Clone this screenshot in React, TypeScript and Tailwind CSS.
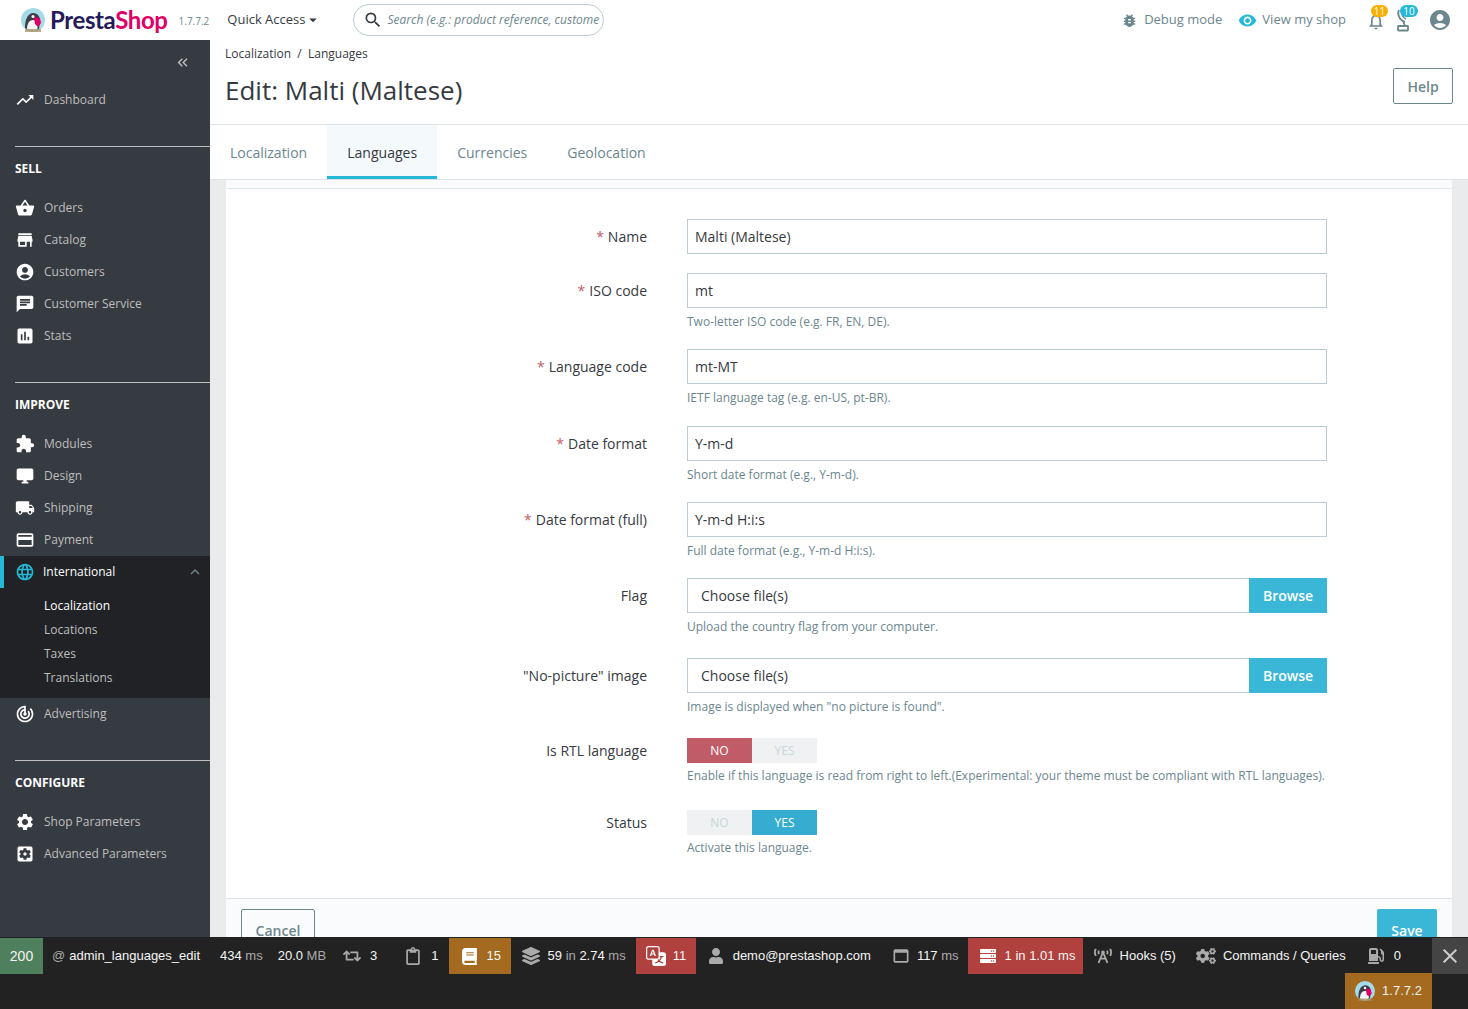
import React from "react";
import {
  MdAccountCircle,
  MdArrowDropDown,
  MdAssessment,
  MdBugReport,
  MdChat,
  MdClose,
  MdCreditCard,
  MdDesktopWindows,
  MdExpandLess,
  MdExtension,
  MdKeyboardDoubleArrowLeft,
  MdLanguage,
  MdLocalShipping,
  MdNotificationsNone,
  MdRemoveRedEye,
  MdSearch,
  MdSettings,
  MdSettingsApplications,
  MdShoppingBasket,
  MdStore,
  MdTrackChanges,
  MdTrendingUp,
} from "react-icons/md";
import {
  FaBook,
  FaBroadcastTower,
  FaCogs,
  FaGasPump,
  FaLayerGroup,
  FaRegClipboard,
  FaRetweet,
  FaServer,
  FaUser,
} from "react-icons/fa";
import { MdOutlineWebAsset } from "react-icons/md";
import { BsTranslate } from "react-icons/bs";

const sans = "font-['Open_Sans',sans-serif]";

function Puffin({ size = 24 }: { size?: number }) {
  return (
    <svg width={size} height={size} viewBox="0 0 24 24">
      <circle cx="12" cy="12" r="12" fill="#a5dbe8" />
      <path d="M4 20c0-8 2-14 8-15 5 0 7 4 7 8l-1 8c-4 2-10 2-14-1z" fill="#3b3f46" />
      <path d="M6 21c0-5 2-9 6-9 3 0 5 3 5 6l-1 4c-3 1-7 1-10-1z" fill="#f4f4f4" />
      <path d="M13 9l6 1 1 5-3 4-3-3z" fill="#df0067" />
      <circle cx="12" cy="8.5" r="1.5" fill="#fff" />
      <path d="M4 21h16v3H4z" fill="#a58b5b" opacity="0.7" />
    </svg>
  );
}

function DishIcon() {
  return (
    <svg width="20" height="24" viewBox="0 0 20 24" fill="none" stroke="#6c868e" strokeWidth="1.8">
      <path d="M5 2C3 6 5 12 11 14" />
      <path d="M8 3c-1 3 1 7 4 8" strokeWidth="1.4" />
      <path d="M9 13l2 5" />
      <rect x="4" y="18" width="10" height="4.5" rx="0.5" />
    </svg>
  );
}

function MenuLink({
  icon: Icon,
  label,
}: {
  icon: React.ComponentType<{ size?: number; className?: string }>;
  label: string;
}) {
  return (
    <div className="flex h-8 items-center pl-[15px]">
      <Icon size={20} className="mr-[9px] text-white" />
      <span className="text-[12px] text-[#bebebe]">{label}</span>
    </div>
  );
}

function MenuTitle({ children }: { children: string }) {
  return (
    <div className="ml-[15px] flex h-[46px] items-center border-t border-[#bebebe] pb-[2px] pt-[1px] text-[12px] font-bold text-white">
      {children}
    </div>
  );
}

function Sidebar() {
  return (
    <aside className="flex w-[210px] shrink-0 flex-col bg-[#363a41]">
      <div className="flex h-[44px] items-center justify-end pr-[19px] pt-[0px]">
        <MdKeyboardDoubleArrowLeft size={17} className="text-[#bebebe]" />
      </div>
      <MenuLink icon={MdTrendingUp} label="Dashboard" />
      <div className="h-[30px]" />
      <MenuTitle>SELL</MenuTitle>
      <div className="h-[-1px]" />
      <MenuLink icon={MdShoppingBasket} label="Orders" />
      <MenuLink icon={MdStore} label="Catalog" />
      <MenuLink icon={MdAccountCircle} label="Customers" />
      <MenuLink icon={MdChat} label="Customer Service" />
      <MenuLink icon={MdAssessment} label="Stats" />
      <div className="h-[30px]" />
      <MenuTitle>IMPROVE</MenuTitle>
      <MenuLink icon={MdExtension} label="Modules" />
      <MenuLink icon={MdDesktopWindows} label="Design" />
      <MenuLink icon={MdLocalShipping} label="Shipping" />
      <MenuLink icon={MdCreditCard} label="Payment" />
      <div className="bg-[#202226] pb-2">
        <div className="flex h-8 items-center border-l-4 border-[#25b9d7] pl-[11px] pr-[6px]">
          <MdLanguage size={20} className="mr-[8px] text-[#25b9d7]" />
          <span className="flex-1 text-[12px] text-white">International</span>
          <MdExpandLess size={18} className="text-[#6c868e]" />
        </div>
        <div className="flex flex-col pl-[44px] pt-[6px] text-[12px] leading-6 text-[#bebebe]">
          <span className="text-white">Localization</span>
          <span>Locations</span>
          <span>Taxes</span>
          <span>Translations</span>
        </div>
      </div>
      <MenuLink icon={MdTrackChanges} label="Advertising" />
      <div className="h-[30px]" />
      <MenuTitle>CONFIGURE</MenuTitle>
      <MenuLink icon={MdSettings} label="Shop Parameters" />
      <MenuLink icon={MdSettingsApplications} label="Advanced Parameters" />
    </aside>
  );
}

function Header() {
  return (
    <header className="flex h-10 shrink-0 items-center bg-white pl-[21px] pr-[16px]">
      <Puffin />
      <span className="ml-[5px] font-['Lato',sans-serif] text-[24px] font-bold tracking-[-0.4px] text-[#251b5b]">
        Presta<span className="text-[#df0067]">Shop</span>
      </span>
      <span className="ml-[11px] mt-[3px] text-[10px] text-[#6c868e]">1.7.7.2</span>
      <span className="ml-[18px] text-[13px] text-[#363a41]">Quick Access</span>
      <MdArrowDropDown size={18} className="-ml-[1px] text-[#363a41]" />
      <div className="ml-[31px] flex h-[32px] w-[251px] items-center overflow-hidden rounded-full border border-[#bbcdd2] pl-[9px] pr-[6px]">
        <MdSearch size={20} className="shrink-0 text-[#363a41]" />
        <span className="ml-[4px] whitespace-nowrap text-[12px] italic text-[#6c868e]">
          Search (e.g.: product reference, custome
        </span>
      </div>
      <div className="flex-1" />
      <MdBugReport size={17} className="text-[#6c868e]" />
      <span className="ml-[6px] text-[13px] text-[#6c868e]">Debug mode</span>
      <MdRemoveRedEye size={19} className="ml-[16px] text-[#25b9d7]" />
      <span className="ml-[5px] text-[13px] text-[#6c868e]">View my shop</span>
      <div className="relative ml-[20px] h-6 w-6">
        <MdNotificationsNone size={20} className="absolute left-0 top-[3px] text-[#6c868e]" />
        <span className="absolute left-[5px] top-[-3px] flex h-[12px] w-[17px] items-center justify-center rounded-full bg-[#fab000] text-[10px] text-white">
          11
        </span>
      </div>
      <div className="relative ml-[4px] h-6 w-6">
        <DishIcon />
        <span className="absolute left-[6px] top-[-3px] flex h-[12px] w-[18px] items-center justify-center rounded-full bg-[#25b9d7] text-[10px] text-white">
          10
        </span>
      </div>
      <MdAccountCircle size={24} className="ml-[10px] text-[#6c868e]" />
    </header>
  );
}

function Field({
  label,
  required,
  value,
  help,
  gap,
}: {
  label: string;
  required?: boolean;
  value: string;
  help?: string;
  gap: string;
}) {
  return (
    <div className={`flex ${gap}`}>
      <label className="flex h-[35px] w-[421px] items-center justify-end text-[14px] text-[#363a41]">
        {required && <span className="mr-[4px] text-[#c05c67]">*</span>}
        {label}
      </label>
      <div className="ml-[40px] w-[640px]">
        <div className="flex h-[35px] items-center border border-[#bbcdd2] px-[7px] text-[14px] text-[#363a41]">
          {value}
        </div>
        {help && <p className="mt-[4px] h-[19px] text-[12px] leading-[19px] text-[#6c868e]">{help}</p>}
      </div>
    </div>
  );
}

function FileField({ label, help }: { label: string; help: string }) {
  return (
    <div className="flex pb-[22px]">
      <label className="flex h-[35px] w-[421px] items-center justify-end text-[14px] text-[#363a41]">{label}</label>
      <div className="ml-[40px] w-[640px]">
        <div className="flex h-[35px]">
          <div className="flex flex-1 items-center border border-r-0 border-[#bbcdd2] pl-[13px] text-[14px] text-[#363a41]">
            Choose file(s)
          </div>
          <div className="flex w-[78px] items-center justify-center bg-[#3ab6d7] text-[14px] font-semibold text-white">
            Browse
          </div>
        </div>
        <p className="mt-[4px] h-[19px] text-[12px] leading-[19px] text-[#6c868e]">{help}</p>
      </div>
    </div>
  );
}

function Toggle({ label, on, help }: { label: string; on: boolean; help: string }) {
  return (
    <div className="flex">
      <label className="flex h-[25px] w-[421px] items-center justify-end text-[14px] text-[#363a41]">{label}</label>
      <div className="ml-[40px] w-[660px]">
        <div className="flex h-[25px] w-[130px] text-[12px]">
          <span
            className={`flex w-[65px] items-center justify-center ${
              on ? "bg-[#eff1f2] text-[#c7d6da]" : "bg-[#c05c67] text-white"
            }`}
          >
            NO
          </span>
          <span
            className={`flex w-[65px] items-center justify-center ${
              on ? "bg-[#36acd0] text-white" : "bg-[#eff1f2] text-[#c7d6da]"
            }`}
          >
            YES
          </span>
        </div>
        <p className="mt-[3px] h-[19px] whitespace-nowrap text-[12px] leading-[19px] text-[#6c868e]">{help}</p>
      </div>
    </div>
  );
}

function Content() {
  return (
    <main className="flex min-w-0 flex-1 flex-col overflow-hidden bg-[#eaebec]">
      <div className="relative h-[85px] shrink-0 border-b border-[#dfe3e5] bg-white pl-[15px]">
        <div className="pt-[5px] text-[12px] leading-[18px] text-[#363a41]">Localization&nbsp; /&nbsp; Languages</div>
        <h1 className="mt-[9px] text-[26px] leading-[36px] text-[#363a41]">Edit: Malti (Maltese)</h1>
        <div className="absolute right-[15px] top-[28px] flex h-[36px] w-[60px] items-center justify-center rounded-[2px] border border-[#6c868e] text-[14px] font-semibold text-[#6c868e]">
          Help
        </div>
      </div>
      <nav className="flex h-[55px] shrink-0 border-b border-[#dfe3e5] bg-white pl-[20px] text-[14px] text-[#6c868e]">
        <span className="flex items-center pr-[20px]">Localization</span>
        <span className="flex w-[110px] items-center justify-center border-b-[3px] border-[#25b9d7] bg-[#f4f9fb] pt-[3px] text-[#363a41]">
          Languages
        </span>
        <span className="flex items-center px-[20px]">Currencies</span>
        <span className="flex items-center px-[20px]">Geolocation</span>
      </nav>
      <div className="ml-[16px] mr-[16px] flex-1 overflow-hidden bg-white">
        <div className="h-[9px] border-b border-[#dfe9ec] bg-[#fafbfc]" />
        <div className="pt-[30px]">
          <Field label="Name" required value="Malti (Maltese)" gap="pb-[19px]" />
          <Field label="ISO code" required value="mt" help="Two-letter ISO code (e.g. FR, EN, DE)." gap="pb-[18px]" />
          <Field label="Language code" required value="mt-MT" help="IETF language tag (e.g. en-US, pt-BR)." gap="pb-[19px]" />
          <Field label="Date format" required value="Y-m-d" help="Short date format (e.g., Y-m-d)." gap="pb-[18px]" />
          <Field label="Date format (full)" required value="Y-m-d H:i:s" help="Full date format (e.g., Y-m-d H:i:s)." gap="pb-[18px]" />
          <div className="pb-0">
            <FileField label="Flag" help="Upload the country flag from your computer." />
            <FileField label={'"No-picture" image'} help={'Image is displayed when "no picture is found".'} />
          </div>
          <div className="flex flex-col gap-[25px]">
            <Toggle
              label="Is RTL language"
              on={false}
              help="Enable if this language is read from right to left.(Experimental: your theme must be compliant with RTL languages)."
            />
            <Toggle label="Status" on help="Activate this language." />
          </div>
        </div>
        <div className="mt-[41px] flex justify-between border-t border-[#dfe3e5] bg-[#fafbfc] px-[15px] pt-[10px]">
          <div className="flex h-[40px] w-[74px] items-center justify-center rounded-[2px] border border-[#6c868e] pt-[2px] text-[14px] font-semibold text-[#6c868e]">
            Cancel
          </div>
          <div className="flex h-[40px] w-[60px] items-center justify-center rounded-[2px] bg-[#3ab6d7] pt-[2px] text-[14px] font-semibold text-white">
            Save
          </div>
        </div>
      </div>
    </main>
  );
}

function Panel({
  children,
  className = "",
}: {
  children: React.ReactNode;
  className?: string;
}) {
  return <div className={`flex h-9 shrink-0 items-center ${className}`}>{children}</div>;
}

function Dim({ children }: { children: string }) {
  return <span className="text-[#aaa]">{children}</span>;
}

function DebugBar() {
  return (
    <footer className="relative h-[72px] shrink-0 bg-[#222] font-['Liberation_Sans',sans-serif] text-[13px] text-[#f5f5f5]">
      <div className="flex h-9 border-t border-[#999]/0">
        <Panel className="w-[43px] justify-center bg-[#4f805d] text-[14px]">200</Panel>
        <Panel className="ml-[9px]">
          <Dim>@</Dim>
          <span className="ml-[4px]">admin_languages_edit</span>
        </Panel>
        <Panel className="ml-[20px]">
          434&nbsp;<Dim>ms</Dim>
        </Panel>
        <Panel className="ml-[15px]">
          20.0&nbsp;<Dim>MB</Dim>
        </Panel>
        <Panel className="ml-[17px]">
          <FaRetweet size={18} className="text-[#aaa] rotate-0" />
          <span className="ml-[9px]">3</span>
        </Panel>
        <Panel className="ml-[27px]">
          <FaRegClipboard size={18} className="text-[#aaa]" />
          <span className="ml-[9px]">1</span>
        </Panel>
        <Panel className="ml-[10px] w-[62px] bg-[#a46a1f] pl-[12px]">
          <FaBook size={17} className="text-white" />
          <span className="ml-[9px]">15</span>
        </Panel>
        <Panel className="ml-[11px]">
          <FaLayerGroup size={18} className="text-[#aaa]" />
          <span className="ml-[8px]">
            59 <Dim>in</Dim> 2.74 <Dim>ms</Dim>
          </span>
        </Panel>
        <Panel className="ml-[10px] w-[60px] bg-[#b0413e] pl-[10px]">
          <BsTranslate size={20} className="text-white" />
          <span className="ml-[7px]">11</span>
        </Panel>
        <Panel className="ml-[12px]">
          <FaUser size={16} className="text-[#aaa]" />
          <span className="ml-[9px]">demo@prestashop.com</span>
        </Panel>
        <Panel className="ml-[20px]">
          <MdOutlineWebAsset size={20} className="text-[#aaa]" />
          <span className="ml-[6px]">
            117 <Dim>ms</Dim>
          </span>
        </Panel>
        <Panel className="ml-[9px] w-[115px] bg-[#b0413e] pl-[12px]">
          <FaServer size={16} className="text-white" />
          <span className="ml-[9px]">1 in 1.01 ms</span>
        </Panel>
        <Panel className="ml-[11px]">
          <FaBroadcastTower size={18} className="text-[#aaa]" />
          <span className="ml-[8px]">Hooks (5)</span>
        </Panel>
        <Panel className="ml-[20px]">
          <FaCogs size={20} className="text-[#aaa]" />
          <span className="ml-[7px]">Commands / Queries</span>
        </Panel>
        <Panel className="ml-[22px]">
          <FaGasPump size={16} className="text-[#aaa]" />
          <span className="ml-[10px]">0</span>
        </Panel>
        <div className="flex-1" />
        <Panel className="w-[36px] justify-center bg-[#444]">
          <MdClose size={24} className="text-[#ccc]" />
        </Panel>
      </div>
      <div className="flex justify-end pr-[36px]">
        <Panel className="w-[87px] justify-center bg-[#a46a1f]">
          <Puffin size={20} />
          <span className="ml-[7px] text-[#f0f0f0]">1.7.7.2</span>
        </Panel>
      </div>
    </footer>
  );
}

export default function App() {
  return (
    <div className={`flex h-[1009px] w-[1468px] flex-col overflow-hidden bg-white ${sans}`}>
      <Header />
      <div className="flex min-h-0 flex-1">
        <Sidebar />
        <Content />
      </div>
      <DebugBar />
    </div>
  );
}
